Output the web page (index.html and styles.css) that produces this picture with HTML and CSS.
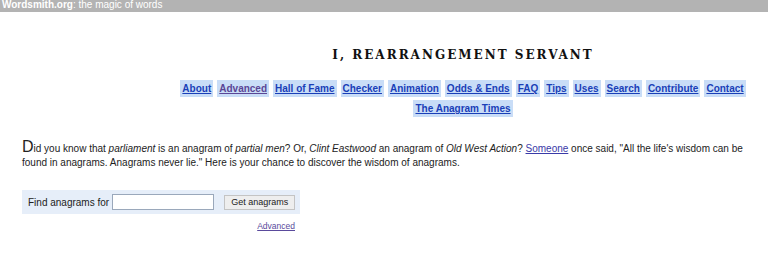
FILE: index.html
```html
<!DOCTYPE html>
<html>
<head>
<meta charset="utf-8">
<link rel="stylesheet" href="styles.css">
</head>
<body>
<div class="topbar"><b>Wordsmith.org</b>: the magic of words</div>
<div class="header">
  <h1 class="title">I, REARRANGEMENT SERVANT</h1>
  <nav class="nav">
    <a href="#">About</a>
    <a href="#" class="visited">Advanced</a>
    <a href="#">Hall of Fame</a>
    <a href="#">Checker</a>
    <a href="#">Animation</a>
    <a href="#">Odds &amp; Ends</a>
    <a href="#">FAQ</a>
    <a href="#">Tips</a>
    <a href="#">Uses</a>
    <a href="#">Search</a>
    <a href="#">Contribute</a>
    <a href="#">Contact</a>
  </nav>
  <nav class="nav nav2">
    <a href="#">The Anagram Times</a>
  </nav>
</div>
<p class="intro"><span class="cap">D</span>id you know that <i>parliament</i> is an anagram of <i>partial men</i>? Or, <i>Clint Eastwood</i> an anagram of <i>Old West Action</i>? <a href="#" class="plain">Someone</a> <span>once said, "All the life's wisdom can be</span> <span>found in anagrams. Anagrams never lie." Here is your chance to discover the wisdom of anagrams.</span></p>
<div class="formwrap">
  <form class="finder">
    <label class="lbl">Find anagrams for</label>
    <input type="text" class="field">
    <button type="button" class="btn">Get anagrams</button>
  </form>
  <div class="adv"><a href="#">Advanced</a></div>
</div>
</body>
</html>
```
FILE: styles.css
```css
html, body {
  margin: 0;
  padding: 0;
  background: #ffffff;
  font-family: "Liberation Sans", Arial, sans-serif;
  color: #222;
}
.topbar {
  height: 12px;
  line-height: 10px;
  background: #b3b3b3;
  color: #ffffff;
  font-size: 10px;
  padding-left: 2px;
  overflow: hidden;
  white-space: nowrap;
}
.header {
  padding: 0 20px 0 178px;
  text-align: center;
}
.title {
  margin: 36px 0 0 0;
  font-family: "DejaVu Serif", serif;
  font-weight: bold;
  font-size: 12px;
  letter-spacing: 2px;
  line-height: 14px;
  color: #111;
}
.nav {
  display: flex;
  flex-wrap: wrap;
  justify-content: center;
  gap: 4px;
  margin-top: 18px;
}
.nav2 { margin-top: 3px; }
.nav a {
  display: block;
  background: #c9ddf7;
  padding: 3px 2px;
  font-size: 10px;
  line-height: 11px;
  font-weight: bold;
  color: #1a3fb8;
  text-decoration: underline;
  white-space: nowrap;
}
.nav a.visited { color: #5a4696; }
.intro {
  margin: 25px 20px 0 22px;
  font-size: 10px;
  line-height: 14px;
  color: #222;
}
.intro .cap {
  font-size: 16px;
  line-height: 10px;
}
.intro a.plain { color: #3a3aa8; }
.formwrap {
  margin: 20px 0 0 22px;
  width: 278px;
}
.finder {
  display: flex;
  align-items: center;
  background: #e6eef9;
  height: 24px;
  padding: 0 5px 0 6px;
  margin: 0;
  font-size: 10px;
  color: #222;
  white-space: nowrap;
}
.lbl { margin-right: 3px; }
.field {
  width: 98px;
  height: 12px;
  border: 1px solid #9aa8bb;
  padding: 1px;
  margin: 0;
  font-size: 10px;
}
.btn {
  margin-left: 10px;
  height: 15px;
  padding: 0 6px;
  font-family: "Liberation Sans", Arial, sans-serif;
  font-size: 9px;
  background: #eeeeee;
  border: 1px solid #c4c4c4;
  color: #222;
  white-space: nowrap;
}
.adv {
  text-align: right;
  padding-right: 5px;
  margin-top: 7px;
  font-size: 8.5px;
}
.adv a { color: #5a4a9c; }
```
